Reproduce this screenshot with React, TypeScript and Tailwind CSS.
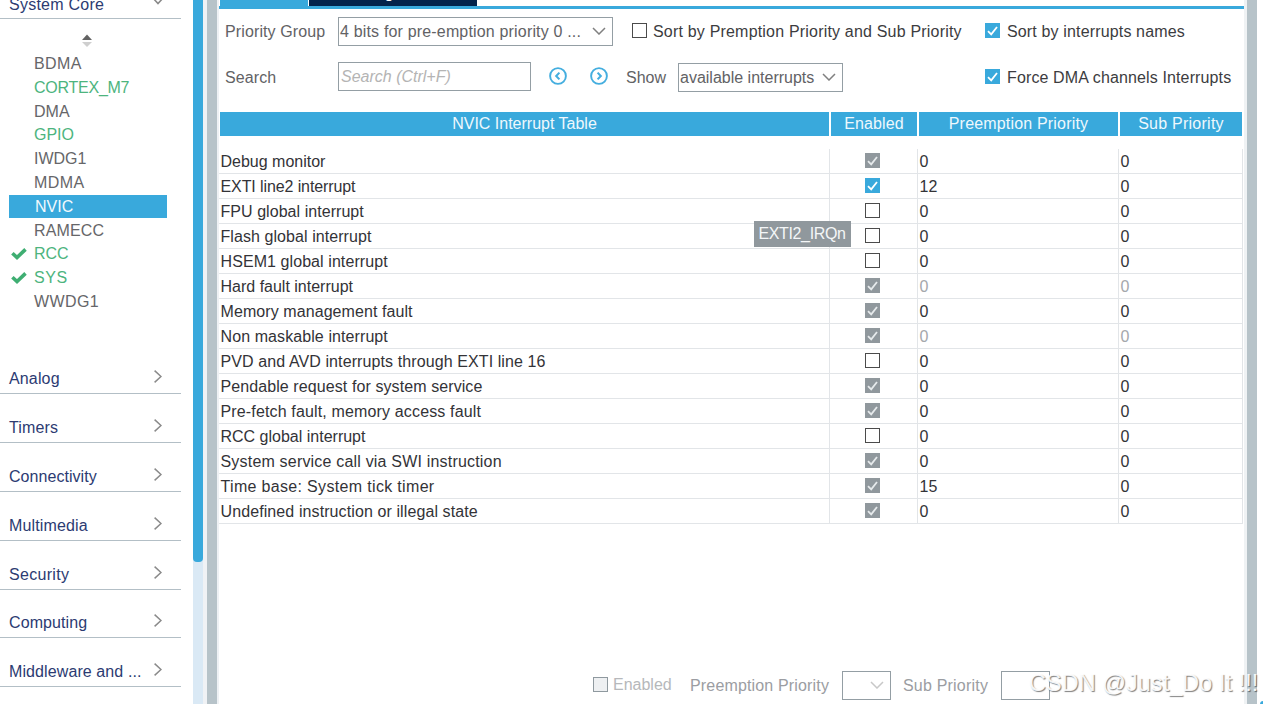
import React from 'react';
import clsx from 'clsx';

type CheckState = 'on' | 'off' | 'locked' | 'disabled';

interface Interrupt {
  name: string;
  state: CheckState;
  preemption: number;
  sub: number;
  fixed?: boolean;
  tracking?: string;
}

const interrupts: Interrupt[] = [
  { name: 'Debug monitor', state: 'locked', preemption: 0, sub: 0 },
  { name: 'EXTI line2 interrupt', state: 'on', preemption: 12, sub: 0, tracking: 'tracking-[-0.1px]' },
  { name: 'FPU global interrupt', state: 'off', preemption: 0, sub: 0, tracking: 'tracking-[0.05px]' },
  { name: 'Flash global interrupt', state: 'off', preemption: 0, sub: 0, tracking: 'tracking-[0.07px]' },
  { name: 'HSEM1 global interrupt', state: 'off', preemption: 0, sub: 0, tracking: 'tracking-[0.08px]' },
  { name: 'Hard fault interrupt', state: 'locked', preemption: 0, sub: 0, fixed: true },
  { name: 'Memory management fault', state: 'locked', preemption: 0, sub: 0, tracking: 'tracking-[0.08px]' },
  { name: 'Non maskable interrupt', state: 'locked', preemption: 0, sub: 0, fixed: true, tracking: 'tracking-[0.09px]' },
  { name: 'PVD and AVD interrupts through EXTI line 16', state: 'off', preemption: 0, sub: 0, tracking: 'tracking-[0.1px]' },
  { name: 'Pendable request for system service', state: 'locked', preemption: 0, sub: 0, tracking: 'tracking-[0.09px]' },
  { name: 'Pre-fetch fault, memory access fault', state: 'locked', preemption: 0, sub: 0, tracking: 'tracking-[0.15px]' },
  { name: 'RCC global interrupt', state: 'off', preemption: 0, sub: 0 },
  { name: 'System service call via SWI instruction', state: 'locked', preemption: 0, sub: 0, tracking: 'tracking-[0.19px]' },
  { name: 'Time base: System tick timer', state: 'locked', preemption: 15, sub: 0, tracking: 'tracking-[0.33px]' },
  { name: 'Undefined instruction or illegal state', state: 'locked', preemption: 0, sub: 0, tracking: 'tracking-[0.1px]' },
];

const peripherals = [
  { name: 'BDMA', tracking: 'tracking-[0.4px]' },
  { name: 'CORTEX_M7', active: true, tracking: 'tracking-[-0.25px]' },
  { name: 'DMA' },
  { name: 'GPIO', active: true },
  { name: 'IWDG1' },
  { name: 'MDMA', tracking: 'tracking-[0.4px]' },
  { name: 'NVIC', selected: true },
  { name: 'RAMECC', tracking: 'tracking-[0.15px]' },
  { name: 'RCC', active: true, checked: true, tracking: 'tracking-[-0.1px]' },
  { name: 'SYS', active: true, checked: true, tracking: 'tracking-[0.6px]' },
  { name: 'WWDG1', tracking: 'tracking-[0.4px]' },
];

const categories = [
  { name: 'Analog', tracking: 'tracking-[0.15px]' },
  { name: 'Timers', tracking: 'tracking-[0.15px]' },
  { name: 'Connectivity', tracking: 'tracking-[0.05px]' },
  { name: 'Multimedia', tracking: 'tracking-[0.15px]' },
  { name: 'Security', tracking: 'tracking-[0.3px]' },
  { name: 'Computing', tracking: 'tracking-[0.1px]' },
  { name: 'Middleware and ...', tracking: 'tracking-[0.1px]' },
];

const columns = 'grid grid-cols-[611px_88px_201px_124px]';

const Checkbox: React.FC<{ state: CheckState; className?: string }> = ({ state, className }) => (
  <span
    className={clsx(
      'flex h-[15px] w-[15px] shrink-0 items-center justify-center',
      state === 'on' && 'bg-[#39a9dc]',
      state === 'locked' && 'bg-[#90989d]',
      state === 'off' && 'border border-[#4b4b4b] bg-white',
      state === 'disabled' && 'border border-[#8f999f] bg-[#eef0f2]',
      className,
    )}
  >
    {(state === 'on' || state === 'locked') && (
      <svg width="15" height="15" viewBox="0 0 15 15" fill="none" stroke={state === 'on' ? '#fff' : '#e6eaec'} strokeWidth="1.8">
        <path d="M3 8.2 L6.2 11.3 L12 4" />
      </svg>
    )}
  </span>
);

const ChevronDown: React.FC<{ color?: string }> = ({ color = '#808080' }) => (
  <svg className="mb-px shrink-0" width="14" height="8" viewBox="0 0 14 8" fill="none" stroke={color} strokeWidth="1.5">
    <path d="M1 1 L7 7 L13 1" />
  </svg>
);

const StepButton: React.FC<{ direction: 'prev' | 'next' }> = ({ direction }) => (
  <svg width="18" height="18" viewBox="0 0 18 18" fill="none" stroke="#44aedf">
    <circle cx="9" cy="9" r="7.9" strokeWidth="1.9" />
    <path strokeWidth="2.1" d={direction === 'prev' ? 'M10.4 5.6 L7.2 9 L10.4 12.4' : 'M7.6 5.6 L10.8 9 L7.6 12.4'} />
  </svg>
);

const Sidebar: React.FC = () => (
  <aside className="flex w-[193px] shrink-0 flex-col">
    <div className="flex h-[19px] w-[181px] items-start justify-between border-b border-[#b3bfc6] pr-[17px] pl-[9px]">
      <span className="mt-[-5px] leading-5 tracking-[0.25px] text-[#2c3b72]">System Core</span>
      <span className="mt-[-3px]">
        <svg width="12" height="8" viewBox="0 0 12 8" fill="none" stroke="#8a8a8a" strokeWidth="1.6">
          <path d="M1 1 L6 6.6 L11 1" />
        </svg>
      </span>
    </div>
    <div className="flex h-[32.8px] justify-center pt-[15px] pr-[19px]">
      <svg width="10" height="14" viewBox="0 0 10 14">
        <path d="M0 6 L5 0.5 L10 6 Z" fill="#626262" />
        <path d="M0 8 L5 13 L10 8 Z" fill="#cfcfcf" />
      </svg>
    </div>
    <ul className="h-[293.6px]">
      {peripherals.map((item) => (
        <li
          key={item.name}
          className={clsx(
            'ml-[9px] flex h-[23.8px] w-[158px] items-center pt-[0.6px] leading-5',
            item.selected ? 'bg-[#39a9dc] text-[#f2f9fd]' : item.active ? 'text-[#4db47e]' : 'text-[#666669]',
            item.tracking,
          )}
        >
          <span className={clsx('shrink-0 pl-[2px]', item.selected ? 'w-[26px]' : 'w-[25px]')}>
            {item.checked && (
              <svg width="16" height="12" viewBox="0 0 16 12" fill="none" stroke="#3fae72" strokeWidth="3.6">
                <path d="M1.4 5.2 L6 9.5 L14.5 1.4" />
              </svg>
            )}
          </span>
          {item.name}
        </li>
      ))}
    </ul>
    {categories.map(({ name, tracking }) => (
      <div
        key={name}
        className="flex h-[48.83px] w-[181px] items-end justify-between border-b border-[#b3bfc6] pr-[19px] pb-[4px] pl-[9px]"
      >
        <span className={clsx('leading-5 text-[#2c3b72]', tracking)}>{name}</span>
        <svg className="mb-[6px]" width="8" height="13" viewBox="0 0 8 13" fill="none" stroke="#8a8a8a" strokeWidth="1.5">
          <path d="M0.6 0.6 L7 6.5 L0.6 12.4" />
        </svg>
      </div>
    ))}
  </aside>
);

const Toolbar: React.FC = () => (
  <>
    <div className="mt-[8px] flex h-[29px] items-center pl-[6px] text-[#626265]">
      <span className="w-[113px] tracking-[0.12px]">Priority Group</span>
      <div className="flex h-[29px] w-[275px] items-center justify-between border border-[#949ea4] pr-[6px] pl-px">
        <span className="tracking-[0.17px]">4 bits for pre-emption priority 0 ...</span>
        <ChevronDown />
      </div>
      <label className="ml-[19px] flex w-[353px] items-center gap-[6px] tracking-[0.19px] text-[#3c3c40]">
        <Checkbox state="off" className="mb-[2px]" />
        Sort by Premption Priority and Sub Priority
      </label>
      <label className="flex items-center gap-[7px] tracking-[0.15px] text-[#3c3c40]">
        <Checkbox state="on" className="mb-[2px]" />
        Sort by interrupts names
      </label>
    </div>
    <div className="mt-[16px] flex h-[30px] items-center pl-[6px] text-[#626265]">
      <span className="w-[113px] pt-px tracking-[0.1px]">Search</span>
      <div className="mb-[1px] flex h-[29px] w-[193px] items-center border border-[#949ea4] pl-[2px] text-[#b4b4b4] italic">
        Search (Ctrl+F)
      </div>
      <div className="ml-[18px] flex w-[77px] gap-[23px] pb-[3px]">
        <StepButton direction="prev" />
        <StepButton direction="next" />
      </div>
      <span className="w-[52px] pt-px">Show</span>
      <div className="mt-[1px] flex h-[29px] w-[165px] items-center justify-between border border-[#949ea4] pr-[6px] pl-px">
        <span>available interrupts</span>
        <ChevronDown />
      </div>
      <label className="ml-[142px] flex items-center gap-[7px] tracking-[0.13px] text-[#3c3c40]">
        <Checkbox state="on" className="mb-[2px]" />
        <span className="pt-px">Force DMA channels Interrupts</span>
      </label>
    </div>
  </>
);

const InterruptTable: React.FC = () => (
  <div className="relative mt-[20px] w-[1024px]">
    <div className={clsx(columns, 'mb-[13px] h-6 text-center leading-6 text-[#eef8fd]')}>
      <div className="mr-px ml-px bg-[#39a9dc]">NVIC Interrupt Table</div>
      <div className="mr-px ml-px bg-[#39a9dc] tracking-[0.1px]">Enabled</div>
      <div className="mr-px ml-px bg-[#39a9dc] tracking-[0.18px]">Preemption Priority</div>
      <div className="mr-px ml-px bg-[#39a9dc] tracking-[0.25px]">Sub Priority</div>
    </div>
    {interrupts.map((row) => (
      <div key={row.name} className={clsx(columns, 'h-[25px] leading-[23px] text-[#333337]')}>
        <div className={clsx('border-r border-b border-[#e2e5e8] pt-px pl-[1.5px]', row.tracking)}>{row.name}</div>
        <div className="flex items-center justify-center border-r border-b border-[#e2e5e8] pr-[2px] pb-px">
          <Checkbox state={row.state} />
        </div>
        <div className={clsx('border-r border-b border-[#e2e5e8] pt-px pl-[1.5px]', row.fixed && 'text-[#a5a8ac]')}>
          {row.preemption}
        </div>
        <div className={clsx('border-r border-b border-[#e2e5e8] pt-px pl-[1.5px]', row.fixed && 'text-[#a5a8ac]')}>
          {row.sub}
        </div>
      </div>
    ))}
    <div className="absolute top-[109px] left-[535px] h-[26px] w-[97px] bg-[#90989d] pr-px text-center leading-[26px] tracking-[-0.35px] text-[#f4f6f7]">
      EXTI2_IRQn
    </div>
  </div>
);

const PriorityEditor: React.FC = () => (
  <div className="mt-auto mb-[4px] flex h-[29px] items-center pl-[374px] text-[#9b9da2]">
    <Checkbox state="disabled" className="mb-[2px]" />
    <span className="ml-[5px] w-[77px] pb-[2px] text-[#b6b8bb]">Enabled</span>
    <span className="w-[152px] tracking-[0.16px]">Preemption Priority</span>
    <div className="flex h-[29px] w-[49px] items-center justify-end border border-[#949ea4] pr-[6px]">
      <ChevronDown color="#c8c8c8" />
    </div>
    <span className="ml-[12px] w-[98px] tracking-[0.2px]">Sub Priority</span>
    <div className="h-[29px] w-[49px] border border-[#949ea4]" />
  </div>
);

export default function App() {
  return (
    <div className="relative flex h-[704px] w-[1263px] overflow-hidden bg-white font-['Liberation_Sans',Arial,sans-serif] text-[16px] whitespace-nowrap">
      <Sidebar />
      <div className="w-[10px] shrink-0 bg-[#dae9f5]">
        <div className="h-[562px] rounded-b-[4px] bg-[#39a9dc]" />
      </div>
      <div className="w-[16px] shrink-0 border-r-2 border-l-4 border-r-[#eef1f4] border-l-[#f0f2f5] bg-[#b7c3c9]" />

      <main className="flex w-[1025px] shrink-0 flex-col">
        <div className="flex h-[6px] pl-px">
          <div className="w-[88px] bg-[#39a9dc]" />
          <div className="ml-px flex w-[168px] items-end justify-center overflow-hidden bg-[#03234b] pl-[16px] leading-5 text-white">
            <span className="mb-[3px]">Code generation</span>
          </div>
        </div>
        <div className="h-[3px] shrink-0 bg-[#39a9dc]" />
        <Toolbar />
        <InterruptTable />
        <PriorityEditor />
      </main>

      <div className="w-[13px] shrink-0 border-l-3 border-[#eff2f4] bg-[#b7c3c9]" />

      <div className="absolute top-[669px] left-[1029px] text-[23.4px] leading-7 tracking-[0.08px] text-white/90 [text-shadow:1px_1px_1px_rgba(0,0,0,0.5)]">
        CSDN @Just_Do It !!!
      </div>
      <div className="absolute -right-[4px] -bottom-[4px] h-[7px] w-[7px] rounded-full bg-[#39a9dc]" />
    </div>
  );
}
